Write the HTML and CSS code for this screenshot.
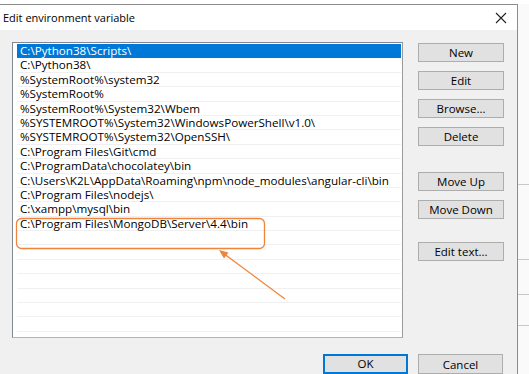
FILE: index.html
```html
<!DOCTYPE html>
<html>
<head>
<meta charset="utf-8">
<link rel="stylesheet" href="styles.css">
</head>
<body>
<div class="screen">
  <div class="window">
    <div class="titlebar">
      <span class="title">Edit environment variable</span>
      <svg class="close" width="12" height="12" viewBox="0 0 12 12"><path d="M1 1 L11 11 M11 1 L1 11" stroke="#222" stroke-width="1.1" fill="none"/></svg>
    </div>
    <div class="content">
      <div class="main">
        <div class="list">
          <div class="row selected">C:\Python38\Scripts\</div>
          <div class="row">C:\Python38\</div>
          <div class="row">%SystemRoot%\system32</div>
          <div class="row">%SystemRoot%</div>
          <div class="row">%SystemRoot%\System32\Wbem</div>
          <div class="row">%SYSTEMROOT%\System32\WindowsPowerShell\v1.0\</div>
          <div class="row">%SYSTEMROOT%\System32\OpenSSH\</div>
          <div class="row">C:\Program Files\Git\cmd</div>
          <div class="row">C:\ProgramData\chocolatey\bin</div>
          <div class="row">C:\Users\K2L\AppData\Roaming\npm\node_modules\angular-cli\bin</div>
          <div class="row">C:\Program Files\nodejs\</div>
          <div class="row">C:\xampp\mysql\bin</div>
          <div class="row">C:\Program Files\MongoDB\Server\4.4\bin</div>
          <div class="row"></div>
          <div class="row"></div>
          <div class="row"></div>
          <div class="row"></div>
          <div class="row"></div>
          <div class="row"></div>
          <div class="row"></div>
          <div class="row"></div>
        </div>
        <div class="side">
          <button class="btn">New</button>
          <button class="btn">Edit</button>
          <button class="btn">Browse...</button>
          <button class="btn">Delete</button>
          <button class="btn move-up">Move Up</button>
          <button class="btn">Move Down</button>
          <button class="btn edit-text">Edit text...</button>
        </div>
      </div>
      <div class="footer">
        <button class="btn ok">OK</button>
        <button class="btn">Cancel</button>
      </div>
    </div>
  </div>
  <div class="behind">
    <div class="bline l1"></div>
    <div class="bline l2"></div>
    <div class="bline l3"></div>
    <div class="bline l4"></div>
  </div>
  <svg class="annot" width="529" height="374" viewBox="0 0 529 374">
    <rect x="16.5" y="218.5" width="248" height="30" rx="5" ry="5" fill="none" stroke="#f0843c" stroke-width="1.3"/>
    <line x1="285" y1="299" x2="225" y2="254.5" stroke="#f0843c" stroke-width="1.3"/>
    <polygon points="219,250 228.5,252.5 224,258.5" fill="#f0843c"/>
  </svg>
</div>
</body>
</html>
```

FILE: styles.css
```css
* { box-sizing: border-box; }
html, body { margin: 0; padding: 0; }
body {
  width: 529px;
  height: 374px;
  overflow: hidden;
  background: #ffffff;
  font-family: "Open Sans", "Noto Sans", sans-serif;
}
.screen {
  position: relative;
  width: 529px;
  height: 374px;
  display: flex;
  padding-top: 4px;
}
.window {
  width: 518px;
  height: 370px;
  border-top: 1px solid #8c8c8c;
  border-right: 1px solid #8c8c8c;
  display: flex;
  flex-direction: column;
  background: #f0f0f0;
}
.titlebar {
  height: 26px;
  background: #ffffff;
  display: flex;
  align-items: center;
  justify-content: space-between;
  padding: 0 10px 0 3px;
}
.title {
  font-size: 11px;
  color: #000;
}
.close { display: block; }
.content {
  flex: 1;
  display: flex;
  flex-direction: column;
  padding: 12px 13px 0 12px;
}
.main {
  display: flex;
  gap: 15px;
}
.list {
  width: 391px;
  height: 296px;
  background: #ffffff;
  border: 1px solid #828790;
  border-right-color: #9a9a9a;
  border-bottom-color: #b4b4b4;
  padding: 1px 1px 0 4px;
  overflow: hidden;
}
.row {
  height: 14.4px;
  line-height: 13.4px;
  font-size: 11.65px;
  color: #000;
  padding-left: 3px;
  border-bottom: 1px solid #f0f0f0;
  white-space: nowrap;
}
.row.selected {
  background: #0078d7;
  color: #ffffff;
  border-bottom-color: #0078d7;
}
.side {
  width: 86px;
  display: flex;
  flex-direction: column;
  gap: 9px;
  padding-top: 1px;
}
.btn {
  height: 19px;
  padding: 0;
  margin: 0;
  background: #e1e1e1;
  border: 1px solid #adadad;
  font-family: "Open Sans", "Noto Sans", sans-serif;
  font-size: 11.5px;
  color: #000;
  line-height: 17px;
  text-align: center;
}
.side .btn { width: 86px; }
.move-up { margin-top: 17px; }
.edit-text { margin-top: 14px; }
.footer {
  display: flex;
  justify-content: flex-end;
  gap: 10px;
  margin-top: 16px;
  padding-right: 1px;
}
.footer .btn {
  width: 85px;
  height: 20px;
}
.ok {
  border: 2px solid #0078d7;
  line-height: 16px;
}
.behind {
  flex: 1;
  height: 374px;
  background: #fafafa;
  display: flex;
  flex-direction: column;
}
.bline {
  height: 1px;
  background: #c8c8c8;
}
.l1 { margin-top: 180px; }
.l2 { margin-top: 74px; }
.l3 { margin-top: 34px; }
.l4 { margin-top: 30px; }
.annot {
  position: absolute;
  left: 0;
  top: 0;
  pointer-events: none;
}
```
